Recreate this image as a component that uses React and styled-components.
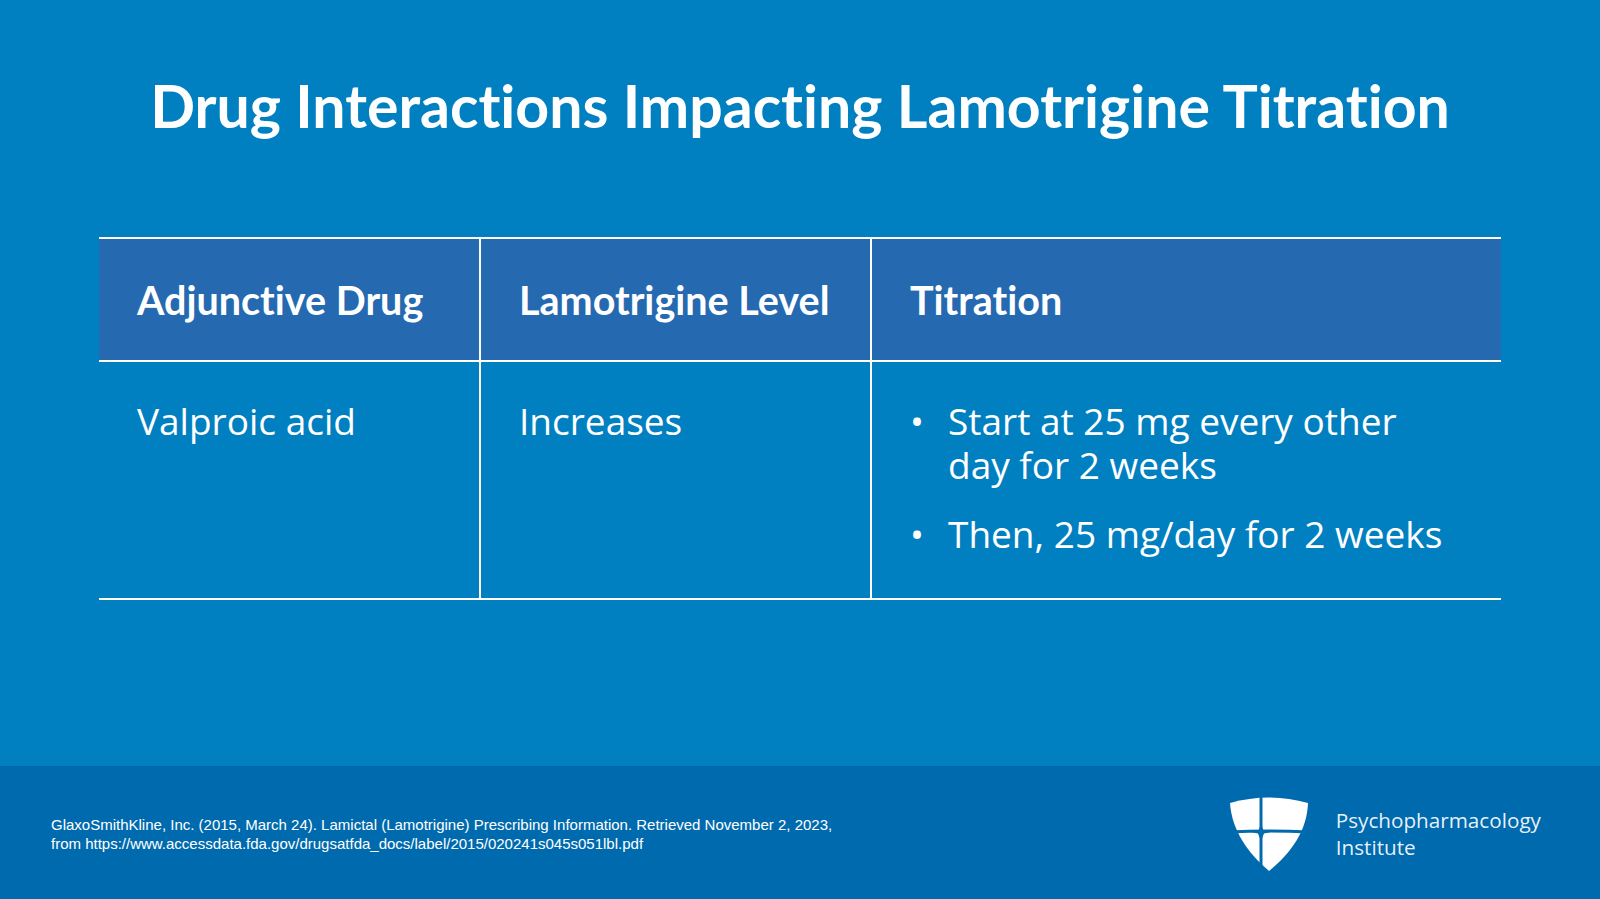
import React from 'react';
import styled, { createGlobalStyle } from 'styled-components';

const GlobalStyle = createGlobalStyle`
  html, body {
    margin: 0;
    padding: 0;
  }
  body {
    background: #0180c1;
    font-family: "Open Sans", "Noto Sans", sans-serif;
    color: #ffffff;
  }
`;

const Page = styled.div`
  width: 1600px;
  height: 899px;
  display: flex;
  flex-direction: column;
  background: #0180c1;
  overflow: hidden;
`;

const Main = styled.main`
  flex: 1;
  display: flex;
  flex-direction: column;
  align-items: center;
  padding-top: 72px;
`;

const Title = styled.h1`
  margin: 0;
  font-family: "Lato", "Noto Sans", sans-serif;
  font-weight: 700;
  font-size: 59px;
  line-height: 68px;
  font-variant-ligatures: none;
  white-space: nowrap;
  color: #ffffff;
`;

const Table = styled.div`
  margin-top: 97px;
  width: 1402px;
  display: grid;
  grid-template-columns: 380px 391px 631px;
  border-top: 2px solid #ffffff;
  border-bottom: 2px solid #ffffff;
`;

const HeadCell = styled.div`
  background: #2569b1;
  height: 121px;
  display: flex;
  align-items: center;
  padding: 0 38px;
  font-family: "Lato", "Noto Sans", sans-serif;
  font-weight: 700;
  font-size: 39.5px;
  font-variant-ligatures: none;
  white-space: nowrap;
  border-bottom: 2px solid #ffffff;
  border-left: ${(p) => (p.$first ? 'none' : '2px solid #ffffff')};
`;

const BodyCell = styled.div`
  padding: 37px 48px 42px 38px;
  font-size: 37px;
  line-height: 44px;
  border-left: ${(p) => (p.$first ? 'none' : '2px solid #ffffff')};
`;

const Bullets = styled.ul`
  margin: 0;
  padding: 0;
  list-style: none;
  display: flex;
  flex-direction: column;
  gap: 25px;
`;

const Bullet = styled.li`
  position: relative;
  padding-left: 38px;

  &::before {
    content: "•";
    position: absolute;
    left: 0;
    top: 0;
  }
`;

const Footer = styled.footer`
  height: 133px;
  background: #006aae;
  display: flex;
  align-items: center;
  justify-content: space-between;
  padding: 0 59px 0 51px;
`;

const Citation = styled.p`
  margin: 0;
  font-family: "Liberation Sans", Arial, sans-serif;
  font-size: 15px;
  line-height: 19px;
  color: #ffffff;
  padding-top: 2px;
`;

const Brand = styled.div`
  display: flex;
  align-items: center;
  gap: 27px;
`;

const BrandName = styled.div`
  font-family: "Open Sans", "Noto Sans", sans-serif;
  font-size: 20.7px;
  line-height: 27px;
  color: rgba(255, 255, 255, 0.92);
  padding-top: 2px;
`;

function Shield() {
  return (
    <svg width="80" height="76" viewBox="0 0 80 76">
      <path
        d="M1,8 Q40,-3 79,8 C78,36 62,58 40,76 C19,58 3,36 1,8 Z"
        fill="#ffffff"
      />
      <path d="M32,0 L32,76" stroke="#006aae" strokeWidth="3" />
      <path d="M0,37 Q40,35 80,37" stroke="#006aae" strokeWidth="3" fill="none" />
      <path d="M32,29 L35,36.5 L42,37 L35,38.5 L32,46 L29,38.5 L22,37 L29,36.5 Z" fill="#006aae" />
    </svg>
  );
}

export default function App() {
  return (
    <Page>
      <GlobalStyle />
      <Main>
        <Title>Drug Interactions Impacting Lamotrigine Titration</Title>
        <Table>
          <HeadCell $first>Adjunctive Drug</HeadCell>
          <HeadCell>Lamotrigine Level</HeadCell>
          <HeadCell>Titration</HeadCell>
          <BodyCell $first>Valproic acid</BodyCell>
          <BodyCell>Increases</BodyCell>
          <BodyCell>
            <Bullets>
              <Bullet>Start at 25 mg every other day for 2 weeks</Bullet>
              <Bullet>Then, 25 mg/day for 2 weeks</Bullet>
            </Bullets>
          </BodyCell>
        </Table>
      </Main>
      <Footer>
        <Citation>
          GlaxoSmithKline, Inc. (2015, March 24). Lamictal (Lamotrigine) Prescribing Information. Retrieved November 2, 2023,
          <br />
          from https://www.accessdata.fda.gov/drugsatfda_docs/label/2015/020241s045s051lbl.pdf
        </Citation>
        <Brand>
          <Shield />
          <BrandName>
            Psychopharmacology
            <br />
            Institute
          </BrandName>
        </Brand>
      </Footer>
    </Page>
  );
}
